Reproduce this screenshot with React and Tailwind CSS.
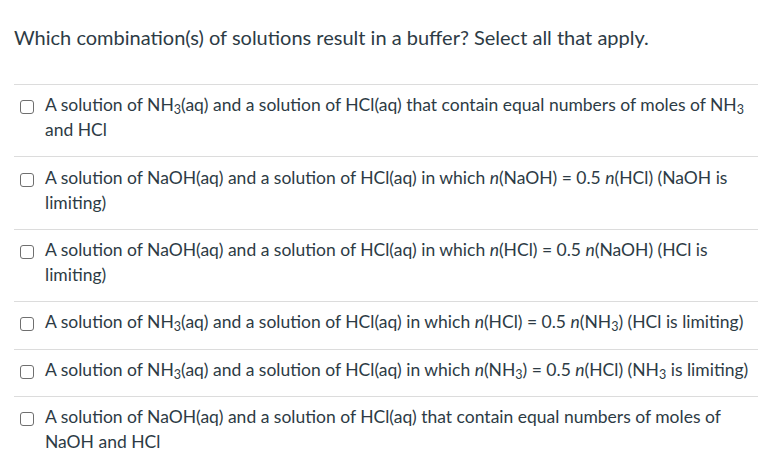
import React from "react";

const Sub = ({ children }) => (
  <span className="text-[12.5px]" style={{ verticalAlign: "-0.22em", lineHeight: 0 }}>{children}</span>
);
const N = () => <i>n</i>;

const options = [
  <>A solution of NH<Sub>3</Sub>(aq) and a solution of HCl(aq) that contain equal numbers of moles of NH<Sub>3</Sub> and HCl</>,
  <>A solution of NaOH(aq) and a solution of HCl(aq) in which <N />(NaOH) = 0.5 <N />(HCl) (NaOH is limiting)</>,
  <>A solution of NaOH(aq) and a solution of HCl(aq) in which <N />(HCl) = 0.5 <N />(NaOH) (HCl is limiting)</>,
  <>A solution of NH<Sub>3</Sub>(aq) and a solution of HCl(aq) in which <N />(HCl) = 0.5 <N />(NH<Sub>3</Sub>) (HCl is limiting)</>,
  <>A solution of NH<Sub>3</Sub>(aq) and a solution of HCl(aq) in which <N />(NH<Sub>3</Sub>) = 0.5 <N />(HCl) (NH<Sub>3</Sub> is limiting)</>,
  <>A solution of NaOH(aq) and a solution of HCl(aq) that contain equal numbers of moles of NaOH and HCl</>,
];

export default function App() {
  return (
    <div
      className="w-[764px] h-[476px] bg-white text-[#2d3b45] pl-[14px] pr-[6px] overflow-hidden"
      style={{ fontFamily: "Lato, 'Open Sans', sans-serif" }}
    >
      <h1 className="pt-[23px] text-[20px] leading-[28px] font-normal">
        Which combination(s) of solutions result in a buffer? Select all that apply.
      </h1>
      <div className="mt-[33px]">
        {options.map((o, i) => (
          <div key={i} className="flex border-t border-[#dcdcdc] pt-[7.3px] pb-[14.1px] pl-[6px]">
            <span className="mt-[8px] w-[14px] h-[14px] shrink-0 rounded-[3px] border-[1.5px] border-[#6f6f6f] bg-white" />
            <div className="ml-[11px] text-[17.5px] leading-[25px]">{o}</div>
          </div>
        ))}
      </div>
    </div>
  );
}
